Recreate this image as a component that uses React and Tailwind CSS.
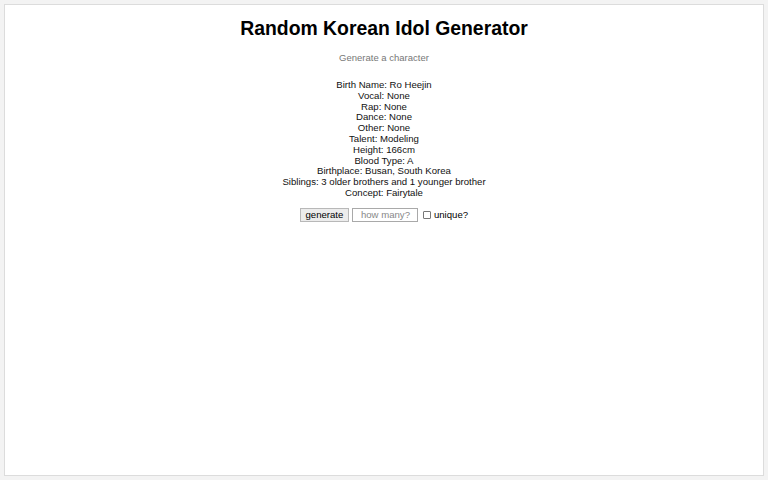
export default function App() {
  const lines = [
    "Birth Name: Ro Heejin",
    "Vocal: None",
    "Rap: None",
    "Dance: None",
    "Other: None",
    "Talent: Modeling",
    "Height: 166cm",
    "Blood Type: A",
    "Birthplace: Busan, South Korea",
    "Siblings: 3 older brothers and 1 younger brother",
    "Concept: Fairytale",
  ];
  return (
    <div className="w-[768px] h-[480px] bg-[#f3f3f3] p-[4px] font-['Liberation_Sans',Arial,sans-serif]">
      <div className="h-full bg-white border border-[#dcdcdc] flex flex-col items-center">
        <h1 className="mt-[11px] text-[19.4px] leading-[24px] font-bold text-black">Random Korean Idol Generator</h1>
        <p className="mt-[12px] text-[9.5px] leading-[12px] text-[#777]">Generate a character</p>
        <div className="mt-[16px] flex flex-col items-center text-[9.6px] leading-[10.8px] text-[#111]">
          {lines.map((l) => (
            <div key={l}>{l}</div>
          ))}
        </div>
        <div className="mt-[9px] flex items-center text-[9.6px] text-black">
          <button className="h-[14px] w-[49px] bg-[#ececec] border border-[#b8b8b8] leading-[12px]">generate</button>
          <input className="ml-[3px] w-[66px] h-[14px] border border-[#a9a9a9] pl-[8px] pr-0 text-[9.6px] leading-[12px] placeholder:text-[#888]" placeholder="how many?" />
          <label className="flex items-center gap-[3px] ml-[5px]">
            <span className="w-[8px] h-[8px] border border-[#777] rounded-[1px] bg-white" />
            <span>unique?</span>
          </label>
        </div>
      </div>
    </div>
  );
}
